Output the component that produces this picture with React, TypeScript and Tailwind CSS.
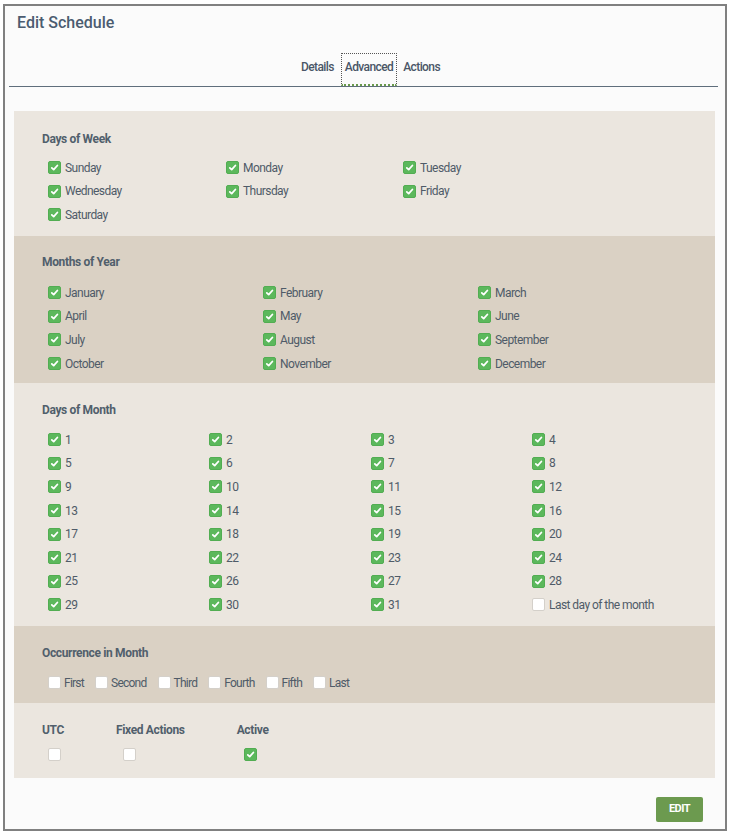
import React from 'react';

const days = ['Sunday', 'Monday', 'Tuesday', 'Wednesday', 'Thursday', 'Friday', 'Saturday'];
const months = [
  'January', 'February', 'March', 'April', 'May', 'June',
  'July', 'August', 'September', 'October', 'November', 'December',
];
const occurrences = ['First', 'Second', 'Third', 'Fourth', 'Fifth', 'Last'];

function Box({ checked }: { checked: boolean }) {
  if (!checked) {
    return <span className="block w-[13px] h-[13px] shrink-0 rounded-[2px] bg-white border border-[#d4d0ca]" />;
  }
  return (
    <span className="flex items-center justify-center w-[13px] h-[13px] shrink-0 rounded-[2px] bg-[#5cb85c] border border-[#52ad52]">
      <svg width="9" height="9" viewBox="0 0 10 10">
        <path d="M2 5.4 L4.1 7.4 L8.2 2.8" fill="none" stroke="white" strokeWidth="2" strokeLinecap="round" strokeLinejoin="round" />
      </svg>
    </span>
  );
}

function Check({ label, checked = true, tight = false }: { label: string; checked?: boolean; tight?: boolean }) {
  return (
    <div className={tight ? 'flex items-center h-[23.6px] gap-[3px]' : 'flex items-center h-[23.6px] gap-[4px]'}>
      <Box checked={checked} />
      <span className={tight ? 'text-[12px] leading-[14px] tracking-[-0.75px] text-[#4f5b68]' : 'text-[12px] leading-[14px] tracking-[-0.55px] text-[#4f5b68]'}>{label}</span>
    </div>
  );
}

function Heading({ children }: { children: React.ReactNode }) {
  return (
    <div className="text-[12px] leading-[14px] font-bold tracking-[-0.35px] text-[#515f6c]">{children}</div>
  );
}

export default function App() {
  return (
    <div className="w-[732px] h-[836px] bg-white pl-[3px] pt-[4px]" style={{ fontFamily: 'Roboto, "Noto Sans", sans-serif' }}>
      <div className="w-[724px] h-[827px] border-2 border-[#808080] bg-[#fbfbfb] flex flex-col">
        <div className="pl-[12px] pt-[7px] h-[47px] text-[16px] leading-[20px] font-medium text-[#4b5c70]">
          Edit Schedule
        </div>

        <div className="ml-[4px] mr-[7px] flex border-b-[1.5px] border-[#5f6e7c] pl-[288px] gap-[3px]">
          <div className="h-[33px] px-[4px] pt-[7px] text-[12px] leading-[14px] font-medium tracking-[-0.6px] text-[#4a5667]">Details</div>
          <div className="h-[33px] px-[3px] pt-[6px] text-[12px] leading-[14px] font-medium tracking-[-0.6px] text-[#4a5667] border border-dotted border-[#555] border-b-[2px] border-b-[#6a9a4c] border-b-solid">Advanced</div>
          <div className="h-[33px] px-[3px] pt-[7px] text-[12px] leading-[14px] font-medium tracking-[-0.6px] text-[#4a5667]">Actions</div>
        </div>

        <div className="ml-[9px] mt-[24px] w-[701px]">
          <div className="h-[125px] bg-[#ebe6df] pt-[21px] px-[28px]">
            <Heading>Days of Week</Heading>
            <div className="mt-[10px] ml-[6px] grid grid-cols-[178px_177px_1fr]">
              {days.map((d) => <Check key={d} label={d} />)}
            </div>
          </div>

          <div className="h-[147px] bg-[#dad1c4] pt-[19px] px-[28px]">
            <Heading>Months of Year</Heading>
            <div className="mt-[12px] ml-[6px] grid grid-cols-[215px_215px_1fr]">
              {months.map((m) => <Check key={m} label={m} />)}
            </div>
          </div>

          <div className="h-[243px] bg-[#ebe6df] pt-[20px] px-[28px]">
            <Heading>Days of Month</Heading>
            <div className="mt-[11px] ml-[6px] grid grid-cols-[161px_162px_161px_1fr]">
              {Array.from({ length: 31 }, (_, i) => <Check key={i} label={String(i + 1)} />)}
              <Check label="Last day of the month" checked={false} />
            </div>
          </div>

          <div className="h-[77px] bg-[#dad1c4] pt-[20px] px-[28px]">
            <Heading>Occurrence in Month</Heading>
            <div className="mt-[11px] ml-[6px] flex gap-[11px]">
              {occurrences.map((o) => <Check key={o} label={o} checked={false} tight />)}
            </div>
          </div>

          <div className="h-[75px] bg-[#ebe6df] pt-[20px] px-[28px] flex gap-[52px]">
            <div>
              <Heading>UTC</Heading>
              <div className="mt-[6px] ml-[6px] flex items-center h-[23.6px]"><Box checked={false} /></div>
            </div>
            <div>
              <Heading>Fixed Actions</Heading>
              <div className="mt-[6px] ml-[7px] flex items-center h-[23.6px]"><Box checked={false} /></div>
            </div>
            <div>
              <Heading>Active</Heading>
              <div className="mt-[6px] ml-[7px] flex items-center h-[23.6px]"><Box checked /></div>
            </div>
          </div>
        </div>

        <div className="flex justify-end mr-[22px] mt-[19px]">
          <button className="w-[47px] h-[25px] rounded-[2px] bg-[#6c9a4f] text-white text-[11px] font-bold tracking-[-0.5px]">
            EDIT
          </button>
        </div>
      </div>
    </div>
  );
}
